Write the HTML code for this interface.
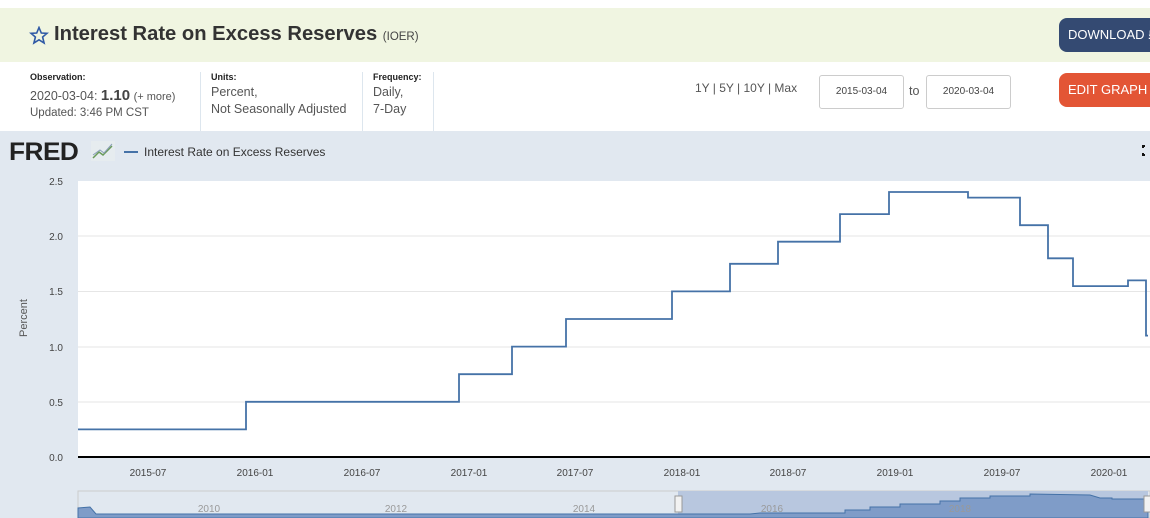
<!DOCTYPE html>
<html><head><meta charset="utf-8"><style>
*{margin:0;padding:0;box-sizing:border-box}
body{width:1150px;height:518px;overflow:hidden;background:#fff;font-family:"Liberation Sans",sans-serif;position:relative}
.abs{position:absolute}
.green{left:0;top:8px;width:1150px;height:54px;background:#f0f5e1}
h1{position:absolute;left:54px;top:23px;font-size:20.2px;font-weight:bold;color:#333;white-space:nowrap}
h1 small{font-size:11.5px;font-weight:normal;color:#444}
.btn{color:#fff;font-size:13px;border-radius:8px;padding-left:9px;line-height:34px;height:34px;width:100px}
.lbl{font-size:9px;font-weight:bold;color:#222}
.val{font-size:12.5px;color:#555;line-height:17px}
.sep{width:1px;background:#dde6ee}
.date{border:1px solid #ccc;border-radius:3px;height:34px;width:85px;font-size:10px;color:#444;text-align:center;line-height:32px}
.chart{left:0;top:131px;width:1150px;height:387px;background:#e1e8f0}
</style></head><body>
<div class="abs green"></div>
<svg class="abs" style="left:29px;top:26px" width="20" height="19" viewBox="0 0 20 19"><polygon points="10,1.5 12.3,7 18,7.3 13.6,11 15.1,17 10,13.8 4.9,17 6.4,11 2,7.3 7.7,7" fill="none" stroke="#2f59a5" stroke-width="1.6"/></svg>
<h1>Interest Rate on Excess Reserves <small>(IOER)</small></h1>
<div class="abs btn" style="left:1059px;top:18px;background:#344a72">DOWNLOAD ⭳</div>
<div class="abs btn" style="left:1059px;top:73px;background:#e35535">EDIT GRAPH ⚙</div>

<div class="abs lbl" style="left:30px;top:72px">Observation:</div>
<div class="abs val" style="left:30px;top:87px">2020-03-04: <b style="font-size:15px;color:#444">1.10</b> <span style="font-size:11px">(+ more)</span></div>
<div class="abs val" style="left:30px;top:105px;font-size:11.5px">Updated: 3:46 PM CST</div>
<div class="abs sep" style="left:200px;top:72px;height:59px"></div>
<div class="abs lbl" style="left:211px;top:72px">Units:</div>
<div class="abs val" style="left:211px;top:84px">Percent,<br>Not Seasonally Adjusted</div>
<div class="abs sep" style="left:362px;top:72px;height:59px"></div>
<div class="abs lbl" style="left:373px;top:72px">Frequency:</div>
<div class="abs val" style="left:373px;top:84px">Daily,<br>7-Day</div>
<div class="abs sep" style="left:433px;top:72px;height:59px"></div>
<div class="abs val" style="left:695px;top:80px;font-size:12px">1Y | 5Y | 10Y | Max</div>
<div class="abs date" style="left:819px;top:75px">2015-03-04</div>
<div class="abs val" style="left:909px;top:83px">to</div>
<div class="abs date" style="left:926px;top:75px">2020-03-04</div>

<div class="abs chart"></div>
<div class="abs" style="left:9px;top:138px;font-size:25px;font-weight:900;color:#222;letter-spacing:-0.5px;transform:scaleX(1.05);transform-origin:left">FRED</div>
<svg class="abs" style="left:91px;top:141px" width="24" height="20"><rect width="24" height="20" fill="#e6ecef"/><polyline points="2,17 8,11 12,14 21,5" fill="none" stroke="#6a9b5a" stroke-width="1.5"/><polyline points="2,14 9,9 13,12 21,3" fill="none" stroke="#8a9fb8" stroke-width="1"/></svg>
<div class="abs" style="left:124px;top:151px;width:14px;height:2px;background:#4572a7"></div>
<div class="abs" style="left:144px;top:145px;font-size:12px;color:#333">Interest Rate on Excess Reserves</div>
<div class="abs" style="left:1142px;top:145px;width:3px;height:3px;border-left:2px solid #111;border-top:2px solid #111"></div>
<div class="abs" style="left:1142px;top:153px;width:3px;height:3px;border-left:2px solid #111;border-bottom:2px solid #111"></div>

<svg class="abs" style="left:0;top:0" width="1150" height="518" font-family="Liberation Sans, sans-serif">
<rect x="78" y="181" width="1072" height="276" fill="#fff"/>
<g stroke="#e6e6e6" stroke-width="1">
<line x1="78" y1="236" x2="1150" y2="236"/><line x1="78" y1="291.5" x2="1150" y2="291.5"/><line x1="78" y1="347" x2="1150" y2="347"/><line x1="78" y1="402" x2="1150" y2="402"/></g>
<g font-size="10" fill="#444" text-anchor="end"><text x="63" y="185">2.5</text><text x="63" y="240">2.0</text><text x="63" y="295">1.5</text><text x="63" y="351">1.0</text><text x="63" y="406">0.5</text><text x="63" y="461">0.0</text></g>
<text transform="translate(27,318) rotate(-90)" text-anchor="middle" font-size="11" fill="#555">Percent</text>
<polyline fill="none" stroke="#4572a7" stroke-width="1.8" points="78,429.4 246,429.4 246,401.8 459,401.8 459,374.2 512,374.2 512,346.6 566,346.6 566,319 672,319 672,291.4 730,291.4 730,263.8 778,263.8 778,241.7 840,241.7 840,214.1 889,214.1 889,192 968,192 968,197.6 1020,197.6 1020,225.2 1048,225.2 1048,258.3 1073,258.3 1073,286.1 1128,286.1 1128,280.4 1146,280.4 1146,335.6 1148,335.6"/>
<line x1="78" y1="457" x2="1150" y2="457" stroke="#000" stroke-width="2"/>
<g font-size="10" fill="#444" text-anchor="middle"><text x="148" y="476">2015-07</text><text x="255" y="476">2016-01</text><text x="362" y="476">2016-07</text><text x="469" y="476">2017-01</text><text x="575" y="476">2017-07</text><text x="682" y="476">2018-01</text><text x="788" y="476">2018-07</text><text x="895" y="476">2019-01</text><text x="1002" y="476">2019-07</text><text x="1109" y="476">2020-01</text></g>
<rect x="78" y="491" width="1072" height="27" fill="#e1e8f0" stroke="#ccc"/>
<rect x="678" y="491" width="470" height="27" fill="#b8c7df"/>
<polygon fill="#7f9cc8" stroke="#4572a7" points="78,518 78,508 90,507 96,514 750,514 760,513 845,513 845,510 870,510 870,507 900,507 900,504 940,504 940,501 960,501 960,498 990,498 990,496 1030,496 1030,494 1090,495 1100,498 1112,498 1112,499 1148,499 1148,518"/>
<g font-size="10" fill="#999" text-anchor="middle"><text x="209" y="512">2010</text><text x="396" y="512">2012</text><text x="584" y="512">2014</text><text x="772" y="512">2016</text><text x="960" y="512">2018</text></g>
<rect x="675" y="496" width="7" height="16" fill="#f2f2f2" stroke="#999"/>
<rect x="1144" y="496" width="7" height="16" fill="#f2f2f2" stroke="#999"/>
</svg>
</body></html>
